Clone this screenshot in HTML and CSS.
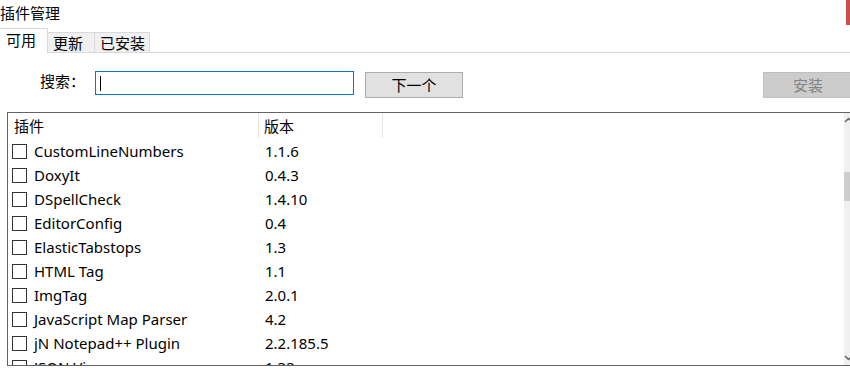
FILE: index.html
```html
<!DOCTYPE html>
<html>
<head>
<meta charset="utf-8">
<link rel="stylesheet" href="styles.css">
</head>
<body>
<div class="window">
  <div class="titlebar">
    <span class="title">插件管理</span>
    <span class="close-edge"></span>
  </div>
  <div class="tabs">
    <div class="tab active">可用</div>
    <div class="tab t2">更新</div>
    <div class="tab t3">已安装</div>
    <div class="tab-rest"></div>
  </div>
  <div class="search-row">
    <label class="search-label">搜索：</label>
    <div class="search-input"><span class="caret"></span></div>
    <button class="btn next">下一个</button>
    <div class="spacer"></div>
    <button class="btn install">安装</button>
  </div>
  <div class="listbox">
    <div class="list-main">
      <div class="list-header">
        <div class="col name">插件</div>
        <div class="col ver">版本</div>
        <div class="col rest"></div>
      </div>
      <div class="rows">
        <div class="row"><span class="cb"></span><span class="pname">CustomLineNumbers</span><span class="pver">1.1.6</span></div>
        <div class="row"><span class="cb"></span><span class="pname">DoxyIt</span><span class="pver">0.4.3</span></div>
        <div class="row"><span class="cb"></span><span class="pname">DSpellCheck</span><span class="pver">1.4.10</span></div>
        <div class="row"><span class="cb"></span><span class="pname">EditorConfig</span><span class="pver">0.4</span></div>
        <div class="row"><span class="cb"></span><span class="pname">ElasticTabstops</span><span class="pver">1.3</span></div>
        <div class="row"><span class="cb"></span><span class="pname">HTML Tag</span><span class="pver">1.1</span></div>
        <div class="row"><span class="cb"></span><span class="pname">ImgTag</span><span class="pver">2.0.1</span></div>
        <div class="row"><span class="cb"></span><span class="pname">JavaScript Map Parser</span><span class="pver">4.2</span></div>
        <div class="row"><span class="cb"></span><span class="pname">jN Notepad++ Plugin</span><span class="pver">2.2.185.5</span></div>
        <div class="row"><span class="cb"></span><span class="pname">JSON Viewer</span><span class="pver">1.33</span></div>
      </div>
    </div>
    <div class="scrollbar">
      <svg class="arrow" width="9" height="9" viewBox="0 0 9 9"><path d="M1 6 L4.5 2.5 L8 6" fill="none" stroke="#606060" stroke-width="1.5"/></svg>
      <div class="track"><div class="thumb"></div></div>
      <svg class="arrow" width="9" height="9" viewBox="0 0 9 9"><path d="M1 3 L4.5 6.5 L8 3" fill="none" stroke="#606060" stroke-width="1.5"/></svg>
    </div>
  </div>
</div>
</body>
</html>
```
FILE: styles.css
```css
html, body {
  margin: 0;
  padding: 0;
  background: #ffffff;
  overflow: hidden;
}
body {
  width: 850px;
  height: 373px;
  font-family: "Noto Sans", "Noto Sans CJK SC", sans-serif;
  color: #000;
}
.window {
  display: flex;
  flex-direction: column;
  height: 373px;
}
.titlebar {
  height: 28px;
  display: flex;
  justify-content: space-between;
  align-items: flex-start;
}
.title {
  font-family: "Noto Sans CJK SC", sans-serif;
  font-size: 15px;
  line-height: 26px;
  padding-left: 0;
}
.close-edge {
  width: 4px;
  height: 25px;
  background: #c94f4f;
}
.tabs {
  display: flex;
  align-items: flex-end;
  height: 25px;
  font-family: "Noto Sans CJK SC", sans-serif;
  font-size: 15px;
}
.tab {
  box-sizing: border-box;
  height: 21px;
  line-height: 19px;
  padding: 0 0 0 5px;
  background: #f0f0f0;
  border: 1px solid #d9d9d9;
  border-left: none;
}
.tab.t2 {
  width: 47px;
}
.tab.t3 {
  width: 55px;
}
.tab.active {
  height: 25px;
  line-height: 22px;
  background: #fff;
  border: 1px solid #d9d9d9;
  border-left: none;
  border-bottom: none;
  width: 48px;
  padding: 0 0 0 6px;
}
.tab-rest {
  flex: 1;
  border-bottom: 1px solid #d9d9d9;
}
.search-row {
  display: flex;
  align-items: flex-start;
  margin-top: 18px;
  height: 41px;
}
.search-label {
  font-family: "Noto Sans CJK SC", sans-serif;
  font-size: 15px;
  margin-left: 40px;
  width: 55px;
  line-height: 20px;
  margin-top: 0;
}
.search-input {
  box-sizing: border-box;
  width: 259px;
  height: 24px;
  border: 1px solid #0078d7;
  display: flex;
  align-items: center;
  padding-left: 4px;
}
.caret {
  width: 1px;
  height: 15px;
  background: #000;
}
.btn {
  box-sizing: border-box;
  height: 26px;
  margin-top: 1px;
  font-family: "Noto Sans CJK SC", sans-serif;
  font-size: 15px;
  padding: 0;
  line-height: 22px;
}
.next {
  width: 98px;
  margin-left: 11px;
  background: #e1e1e1;
  border: 1px solid #adadad;
  color: #000;
}
.spacer {
  flex: 1;
}
.install {
  width: 90px;
  margin-right: -3px;
  background: #cccccc;
  border: 1px solid #bfbfbf;
  color: #838383;
}
.listbox {
  box-sizing: border-box;
  margin-left: 7px;
  width: 846px;
  height: 254px;
  border: 1px solid #646464;
  border-right: none;
  display: flex;
}
.list-main {
  flex: 1;
  overflow: hidden;
}
.list-header {
  display: flex;
  height: 25px;
  font-family: "Noto Sans CJK SC", sans-serif;
  font-size: 15px;
  line-height: 25px;
}
.col {
  box-sizing: border-box;
  border-right: 1px solid #e5e5e5;
}
.col.name {
  width: 251px;
  padding-left: 6px;
}
.col.ver {
  width: 124px;
  padding-left: 5px;
}
.col.rest {
  flex: 1;
  border-right: none;
}
.rows {
  display: flex;
  flex-direction: column;
  padding-top: 1px;
}
.row {
  display: flex;
  align-items: center;
  height: 24px;
  font-size: 15px;
}
.cb {
  box-sizing: border-box;
  width: 15px;
  height: 15px;
  border: 1px solid #333;
  margin-left: 4px;
  margin-right: 7px;
  flex: none;
}
.pname {
  width: 231px;
  white-space: nowrap;
}
.pver {
  white-space: nowrap;
}
.scrollbar {
  width: 9px;
  background: #f0f0f0;
  display: flex;
  flex-direction: column;
  align-items: center;
}
.arrow {
  flex: none;
  margin: 3px 0;
}
.track {
  flex: 1;
  width: 100%;
}
.thumb {
  margin-top: 44px;
  height: 29px;
  background: #cdcdcd;
}
```
